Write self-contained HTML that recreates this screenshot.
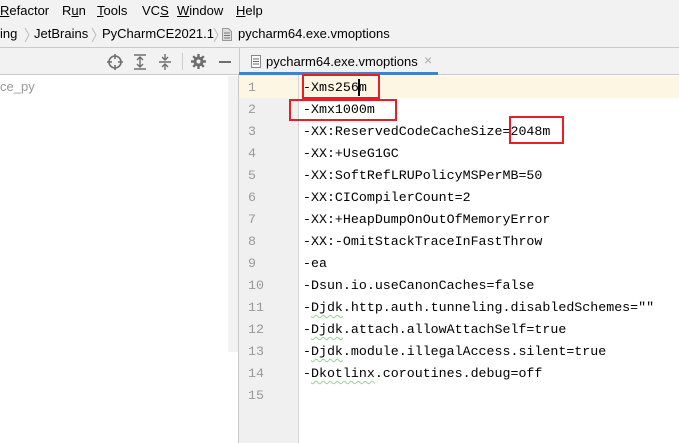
<!DOCTYPE html>
<html><head><meta charset="utf-8"><style>
*{margin:0;padding:0;box-sizing:border-box}
body{width:679px;height:443px;overflow:hidden;background:#fff;font-family:"Liberation Sans","Noto Sans CJK SC",sans-serif;position:relative;font-size:13px;color:#000}
.abs{position:absolute}
#menu{left:0;top:0;width:679px;height:22px;background:#f2f2f2}
#menu span{position:absolute;top:3px}
#bc{left:0;top:22px;width:679px;height:26px;background:#f2f2f2;border-bottom:1px solid #c9c9c9}
#bc span{position:absolute;top:4px}
#tb{left:0;top:48px;width:679px;height:27px;background:#f2f2f2;border-bottom:1px solid #c9c9c9}
#gut{left:238px;top:75px;width:61px;height:368px;background:#f0f0f0;border-left:1px solid #c9c9c9;border-right:1px solid #d5d5d5}
#hl{left:299px;top:76px;width:380px;height:22px;background:#fdf6e2}
#hl2{left:239px;top:76px;width:59px;height:22px;background:#fdf6e2}
.ln{position:absolute;left:248px;width:20px;color:#999;font-family:"Liberation Mono",monospace;font-size:13.3px}
.cd{position:absolute;left:303px;font-family:"Liberation Mono",monospace;font-size:13.3px;color:#000;white-space:pre}
.rb{position:absolute;border:2px solid #e61e25}
.wav{text-decoration:underline wavy #9ccf9c;text-underline-offset:3px;text-decoration-thickness:1px}
.chev{position:absolute;top:5px}
</style></head><body>
<div id="menu" class="abs">
<span style="left:0"><u>R</u>efactor</span><span style="left:62px">R<u>u</u>n</span><span style="left:97px"><u>T</u>ools</span><span style="left:142px">VC<u>S</u></span><span style="left:177px"><u>W</u>indow</span><span style="left:236px"><u>H</u>elp</span>
</div>
<div id="bc" class="abs">
<span style="left:0">ing</span>
<svg class="chev" style="left:24px" width="6" height="16"><path d="M1 1l4 7-4 7" stroke="#bbb" fill="none"/></svg>
<span style="left:34px">JetBrains</span>
<svg class="chev" style="left:91px" width="6" height="16"><path d="M1 1l4 7-4 7" stroke="#bbb" fill="none"/></svg>
<span style="left:102px">PyCharmCE2021.1</span>
<svg class="chev" style="left:213px" width="6" height="16"><path d="M1 1l4 7-4 7" stroke="#bbb" fill="none"/></svg>
<svg class="abs" style="left:222px;top:6px" width="10" height="13"><path d="M0.5 0.5h6l3 3v9h-9z" fill="#ddd" stroke="#999"/><path d="M2 5h6M2 7.5h6M2 10h6" stroke="#777"/></svg>
<span style="left:238px">pycharm64.exe.vmoptions</span>
</div>
<div id="tb" class="abs">
<svg class="abs" style="left:106px;top:5px" width="18" height="18"><circle cx="9" cy="9" r="6" fill="none" stroke="#6e6e6e" stroke-width="1.6"/><path d="M9 1v5M9 12v5M1 9h5M12 9h5" stroke="#6e6e6e" stroke-width="1.6"/></svg>
<svg class="abs" style="left:133px;top:5px" width="14" height="18"><path d="M1 2h12M1 16h12M7 5v8M4 7l3-3 3 3M4 11l3 3 3-3" stroke="#6e6e6e" stroke-width="1.4" fill="none"/></svg>
<svg class="abs" style="left:158px;top:5px" width="14" height="18"><path d="M1 9h12M7 1v5M7 12v5M4 4l3 3 3-3M4 14l3-3 3 3" stroke="#6e6e6e" stroke-width="1.4" fill="none"/></svg>
<div class="abs" style="left:182px;top:5px;width:1px;height:17px;background:#ccc"></div>
<svg class="abs" style="left:191px;top:6px" width="15" height="15"><circle cx="7.5" cy="7.5" r="5" fill="#6e6e6e"/><path d="M7.5 0v15M0 7.5h15M2.2 2.2l10.6 10.6M12.8 2.2L2.2 12.8" stroke="#6e6e6e" stroke-width="2.4"/><circle cx="7.5" cy="7.5" r="2" fill="#f2f2f2"/></svg>
<div class="abs" style="left:219px;top:13px;width:12px;height:2px;background:#6e6e6e"></div>
<div class="abs" style="left:239px;top:0;width:200px;height:27px;border-left:1px solid #c9c9c9"></div>
<svg class="abs" style="left:251px;top:7px" width="10" height="13"><rect x="0.5" y="0.5" width="9" height="12" fill="#fff" stroke="#888"/><path d="M2 4h6M2 6.5h6M2 9h6" stroke="#666"/></svg>
<span class="abs" style="left:266px;top:6px">pycharm64.exe.vmoptions</span>
<span class="abs" style="left:424px;top:4px;color:#aaa;font-size:14px">×</span>
<div class="abs" style="left:239px;top:24px;width:199px;height:3px;background:#4083c9"></div>
</div>
<div class="abs" style="left:0;top:79px;color:#999">ce_py</div>
<div class="abs" style="left:228px;top:76px;width:10px;height:276px;background:#f2f2f2"></div>
<div id="gut" class="abs"></div>
<div id="hl" class="abs"></div><div id="hl2" class="abs"></div>
<div class="ln" style="top:80px">1</div><div class="ln" style="top:102px">2</div><div class="ln" style="top:124px">3</div><div class="ln" style="top:146px">4</div><div class="ln" style="top:168px">5</div><div class="ln" style="top:190px">6</div><div class="ln" style="top:212px">7</div><div class="ln" style="top:234px">8</div><div class="ln" style="top:256px">9</div><div class="ln" style="top:278px">10</div><div class="ln" style="top:300px">11</div><div class="ln" style="top:322px">12</div><div class="ln" style="top:344px">13</div><div class="ln" style="top:366px">14</div><div class="ln" style="top:388px">15</div>
<div class="cd" style="top:80px">-Xms256m</div>
<div class="cd" style="top:102px">-Xmx1000m</div>
<div class="cd" style="top:124px">-XX:ReservedCodeCacheSize=2048m</div>
<div class="cd" style="top:146px">-XX:+UseG1GC</div>
<div class="cd" style="top:168px">-XX:SoftRefLRUPolicyMSPerMB=50</div>
<div class="cd" style="top:190px">-XX:CICompilerCount=2</div>
<div class="cd" style="top:212px">-XX:+HeapDumpOnOutOfMemoryError</div>
<div class="cd" style="top:234px">-XX:-OmitStackTraceInFastThrow</div>
<div class="cd" style="top:256px">-ea</div>
<div class="cd" style="top:278px">-Dsun.io.useCanonCaches=false</div>
<div class="cd" style="top:300px">-<span class="wav">Djdk</span>.http.auth.tunneling.disabledSchemes=""</div>
<div class="cd" style="top:322px">-<span class="wav">Djdk</span>.attach.allowAttachSelf=true</div>
<div class="cd" style="top:344px">-<span class="wav">Djdk</span>.module.illegalAccess.silent=true</div>
<div class="cd" style="top:366px">-<span class="wav">Dkotlinx</span>.coroutines.debug=off</div>
<div class="abs" style="left:358px;top:79px;width:2px;height:17px;background:#000"></div>
<div class="rb" style="left:302px;top:74px;width:78px;height:25px"></div>
<div class="rb" style="left:289px;top:99px;width:108px;height:22px"></div>
<div class="rb" style="left:509px;top:116px;width:55px;height:28px"></div>
</body></html>
